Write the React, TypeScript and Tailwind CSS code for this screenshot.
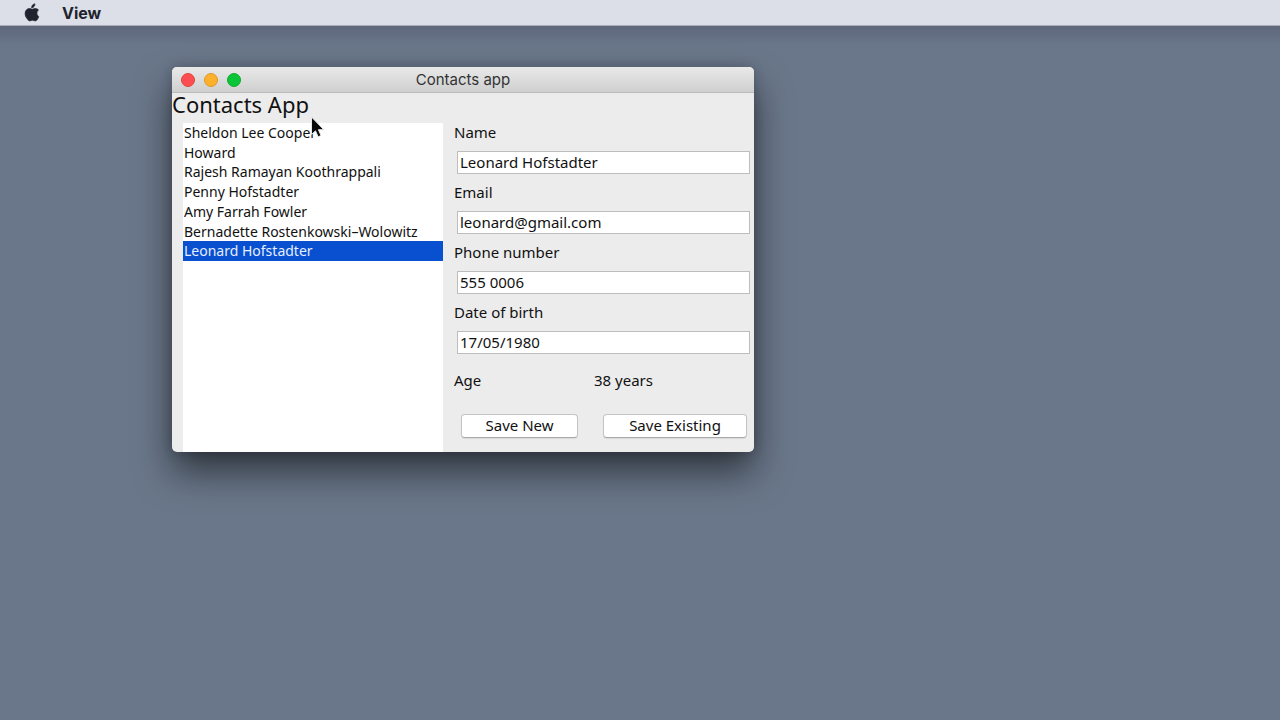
import { useState } from 'react'
import clsx from 'clsx'

const contacts = [
  'Sheldon Lee Cooper',
  'Howard',
  'Rajesh Ramayan Koothrappali',
  'Penny Hofstadter',
  'Amy Farrah Fowler',
  'Bernadette Rostenkowski–Wolowitz',
  'Leonard Hofstadter',
]

const fields = [
  { id: 'name', label: 'Name', value: 'Leonard Hofstadter' },
  { id: 'email', label: 'Email', value: 'leonard@gmail.com' },
  { id: 'phone', label: 'Phone number', value: '555 0006' },
  { id: 'dob', label: 'Date of birth', value: '17/05/1980' },
]

const pushButton =
  'h-6 rounded border border-[#c4c4c4] border-b-[#a9a9a9] bg-white pb-0.5 text-[15px] leading-5 shadow-[0_1px_1px_rgba(0,0,0,0.08)]'

function MenuBar() {
  return (
    <header className="flex h-[26px] items-center border-b border-[#a9adb8] bg-[#dcdfe8] pl-6 text-[#20232d]">
      <button type="button" aria-label="Apple menu" className="mr-[22px]">
        <svg
          className="h-5 w-4"
          viewBox="0 0 16 20"
          fill="currentColor"
          stroke="currentColor"
          strokeWidth="0.7"
          strokeLinejoin="round"
        >
          <path d="M10.9 0.8c.1 1.1-.3 2.1-.9 2.8-.6.8-1.5 1.3-2.4 1.2-.1-1 .4-2.1.9-2.7.6-.7 1.6-1.2 2.4-1.3z" />
          <path d="M14.5 7c-.1.1-1.6 1.100-1.600 3.200 0 2.500 1.900 3.300 1.900 3.400 0 .1-.3 1.200-1.100 2.300-.7 1-1.400 2-2.500 2s-1.400-.6-2.700-.6c-1.200 0-1.700.6-2.700.6s-1.700-.9-2.500-2C2.000 14.600 1.100 12.500 1.100 10.500c0-3.200 2.300-4.900 4.300-4.900 1.100 0 2.200.7 2.900.7.6 0 1.700-.7 2.900-.7.500 0 2.200 0 3.300 1.400z" />
        </svg>
      </button>
      <button type="button" className="text-base font-bold">
        View
      </button>
    </header>
  )
}

function TitleBar() {
  return (
    <div className="grid h-[26px] grid-cols-[1fr_auto_1fr] items-center border-b border-[#bababa] bg-linear-to-b from-[#e9e9e9] to-[#cfcfcf] px-[9px]">
      <div className="flex gap-[9px]">
        <button type="button" aria-label="Close" className="size-[14px] rounded-full border border-[#e0443e] bg-[#fc4e50]" />
        <button type="button" aria-label="Minimize" className="size-[14px] rounded-full border border-[#dd9a26] bg-[#fdb02b]" />
        <button type="button" aria-label="Zoom" className="size-[14px] rounded-full border border-[#12ac28] bg-[#09c537]" />
      </div>
      <span className="font-[Inter,sans-serif] text-[15px] leading-5 text-[#333]">Contacts app</span>
    </div>
  )
}

function ContactList() {
  const [selected, setSelected] = useState(contacts.length - 1)

  return (
    <div className="bg-white">
      <ul className="grid h-[138px] auto-rows-fr text-[14px] leading-5">
        {contacts.map((contact, i) => (
          <li key={contact} className="flex">
            <button
              type="button"
              onClick={() => setSelected(i)}
              className={clsx(
                'w-full pl-px text-left whitespace-nowrap',
                i === selected && 'bg-[#0850d0] text-[#e6eeff]'
              )}
            >
              {contact}
            </button>
          </li>
        ))}
      </ul>
    </div>
  )
}

function ContactForm() {
  return (
    <form className="pr-1 text-[15px] leading-[18px]" onSubmit={(e) => e.preventDefault()}>
      <div className="flex flex-col gap-[9px]">
        {fields.map((field) => (
          <div key={field.id} className="flex flex-col gap-[10px]">
            <label htmlFor={field.id}>{field.label}</label>
            <input
              id={field.id}
              type="text"
              defaultValue={field.value}
              className="ml-[3px] h-[23px] border border-[#bdbdbd] bg-white px-0.5 pb-0.5 outline-none"
            />
          </div>
        ))}
      </div>
      <div className="mt-[17px] grid grid-cols-[140px_1fr]">
        <span>Age</span>
        <output>38 years</output>
      </div>
      <div className="mt-[25px] mb-[14px] flex justify-between pr-[3px] pl-[7px]">
        <button type="submit" className={clsx(pushButton, 'w-[117px]')}>
          Save New
        </button>
        <button type="button" className={clsx(pushButton, 'w-[144px]')}>
          Save Existing
        </button>
      </div>
    </form>
  )
}

export default function App() {
  return (
    <div className="relative min-h-screen bg-[#6a778a] font-[Inter,sans-serif]">
      <MenuBar />
      <div className="h-5 bg-linear-to-b from-[#5f677b] to-[#6a778a]" />

      <main className="absolute top-[67px] left-[172px] w-[582px] overflow-hidden rounded-[5px] bg-[#ececec] font-['Noto_Sans',sans-serif] text-[#111] shadow-[0_20px_36px_rgba(0,0,0,0.55),0_0_12px_rgba(0,0,0,0.2)]">
        <TitleBar />
        <h1 className="mb-[7px] text-[22px] leading-[23px]">Contacts App</h1>
        <div className="grid grid-cols-[260px_1fr] gap-[11px] pl-[11px]">
          <ContactList />
          <ContactForm />
        </div>
      </main>

      <svg className="pointer-events-none absolute top-[116px] left-[310px] h-6 w-4" viewBox="0 0 16 24">
        <path
          d="M1.500 1v17.500l4-3.700 2.600 6 2.900-1.200-2.600-5.900h5.400z"
          fill="#080808"
          stroke="#e8e8e8"
          strokeWidth="1"
        />
      </svg>
    </div>
  )
}
